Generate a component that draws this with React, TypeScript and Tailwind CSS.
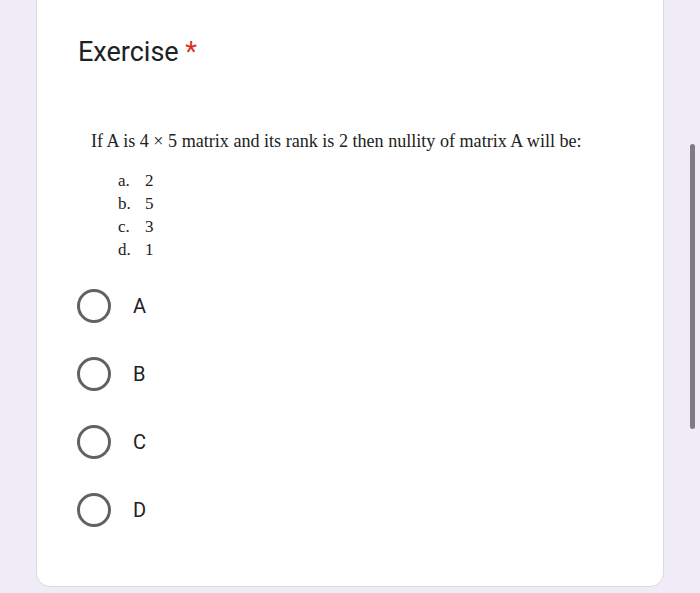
import React from 'react';

const options = ['A', 'B', 'C', 'D'];
const items = [
  ['a.', '2'],
  ['b.', '5'],
  ['c.', '3'],
  ['d.', '1'],
];

function Radio() {
  return (
    <span className="block h-[34px] w-[34px] shrink-0 rounded-full border-[3px] border-[#5f6368]" />
  );
}

export default function App() {
  return (
    <div className="relative h-[593px] w-[700px] overflow-hidden bg-[#efebf7]">
      <div className="mx-[36px] -mt-[10px] h-[597px] w-[628px] rounded-b-[14px] border border-[#dcdae0] bg-white">
        <div className="pl-[41px] pt-[45px] font-['Roboto',sans-serif] text-[27px] leading-[32px] text-[#202124]">
          Exercise <span className="text-[#d93025]">*</span>
        </div>

        <div className="mt-[61px] pl-[54px] font-['Liberation_Serif',serif] text-[#222]">
          <p className="text-[18.1px] leading-[24px]">
            If A is 4 × 5 matrix and its rank is 2 then nullity of matrix A will be:
          </p>
          <ul className="mt-[16px] pl-[27px] text-[17px] leading-[23px]">
            {items.map(([k, v]) => (
              <li key={k} className="flex">
                <span className="w-[27px]">{k}</span>
                <span>{v}</span>
              </li>
            ))}
          </ul>
        </div>

        <div className="mt-[28px] flex flex-col gap-[34px] pl-[40px]">
          {options.map((o) => (
            <label key={o} className="flex items-center gap-[22px]">
              <Radio />
              <span className="font-['Roboto',sans-serif] text-[20px] leading-[34px] text-[#202124]">{o}</span>
            </label>
          ))}
        </div>
      </div>

      <div className="absolute left-[690px] top-[144px] h-[285px] w-[5px] rounded-full bg-[#7d7a85]" />
    </div>
  );
}
